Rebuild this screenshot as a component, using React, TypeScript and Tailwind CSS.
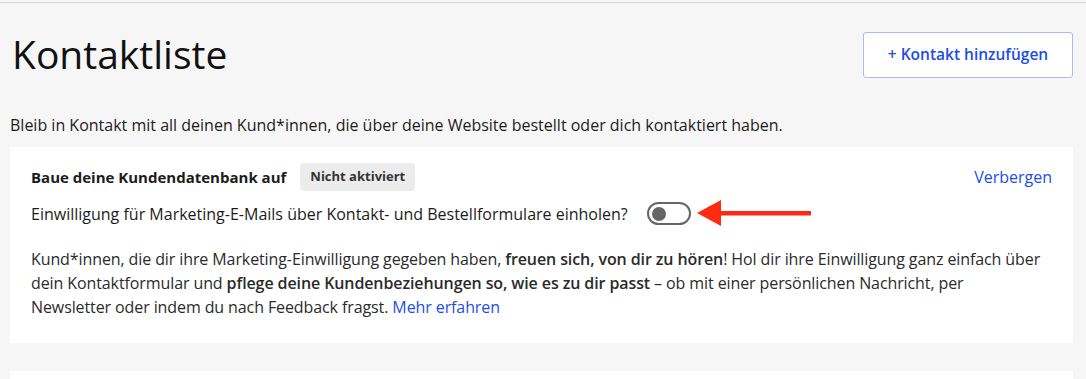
export default function App() {
  return (
    <div
      className="min-h-[379px] bg-[#f6f6f6] pt-[2px] text-[#1c1c1c]"
      style={{ fontFamily: '"Open Sans", "Noto Sans", sans-serif' }}
    >
      <div className="border-t border-[#d9d9d9] pl-[10px] pr-[13px]">
        <div className="flex items-start justify-between pt-[28px]">
          <h1 className="mt-[1px] pl-[2px] text-[39px] leading-[44px] font-normal text-[#111]">Kontaktliste</h1>
          <button className="mt-[1px] h-[46px] w-[210px] rounded-[3px] border border-[#a8bdf7] bg-white text-[15.5px] font-semibold text-[#1a4ee6]">
            + Kontakt hinzufügen
          </button>
        </div>

        <p className="mt-[36px] text-[16px] leading-[22px]">
          Bleib in Kontakt mit all deinen Kund*innen, die über deine Website bestellt oder dich kontaktiert haben.
        </p>

        <section className="mt-[11px] bg-white px-[21px] pt-[16px] pb-[24px]">
          <div className="flex items-center justify-between">
            <div className="flex items-center gap-[14px]">
              <h2 className="text-[15px] font-bold">Baue deine Kundendatenbank auf</h2>
              <span className="rounded-[4px] bg-[#ececec] px-[10px] py-[4px] text-[13px] font-bold text-[#333]">
                Nicht aktiviert
              </span>
            </div>
            <a className="text-[16px] text-[#1a4ee6]">Verbergen</a>
          </div>

          <div className="mt-[11px] flex items-center gap-[19px]">
            <span className="text-[16px]">
              Einwilligung für Marketing-E-Mails über Kontakt- und Bestellformulare einholen?
            </span>
            <div className="relative flex items-center">
              <span className="flex h-[23px] w-[44px] items-center rounded-full border-2 border-[#666] px-[3px]">
                <span className="h-[14px] w-[14px] rounded-full bg-[#666]" />
              </span>
              {/* annotation arrow pointing at the switch */}
              <svg className="absolute left-[50px] top-[-3px]" width="116" height="28" viewBox="0 0 116 28">
                <polygon points="0,14 24,1 24,27" fill="#ff2a12" />
                <rect x="22" y="12" width="92" height="4.5" fill="#ff2a12" />
              </svg>
            </div>
          </div>

          <p className="mt-[21px] text-[16px] leading-[24px] tracking-[-0.1px] text-[#2b2b2b]">
            Kund*innen, die dir ihre Marketing-Einwilligung gegeben haben,{' '}
            <span className="font-semibold">freuen sich, von dir zu hören</span>! Hol dir ihre Einwilligung ganz einfach
            über
            <br />
            dein Kontaktformular und{' '}
            <span className="font-semibold">pflege deine Kundenbeziehungen so, wie es zu dir passt</span> – ob mit einer
            persönlichen Nachricht, per
            <br />
            Newsletter oder indem du nach Feedback fragst. <a className="text-[#1a4ee6]">Mehr erfahren</a>
          </p>
        </section>

        <section className="mt-[28px] h-[20px] bg-white" />
      </div>
    </div>
  );
}
